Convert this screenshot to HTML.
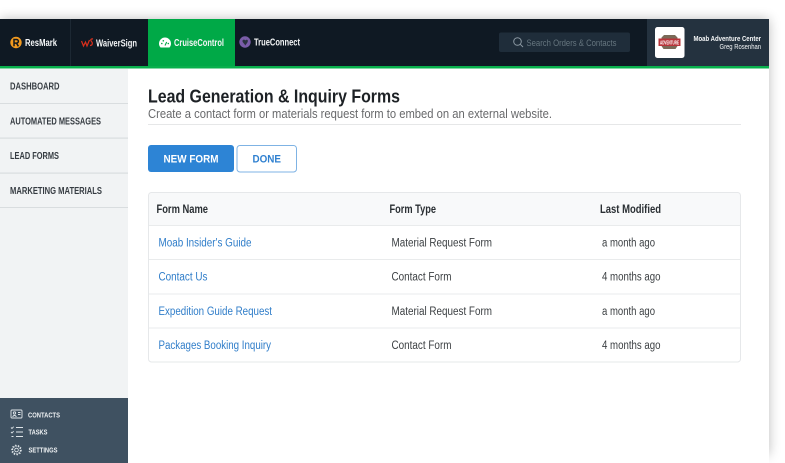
<!DOCTYPE html>
<html><head><meta charset="utf-8"><style>
html,body{margin:0;padding:0;background:#fff;width:785px;height:463px;overflow:hidden}
svg{display:block}
text{font-family:"Liberation Sans",sans-serif}
.h{font-weight:bold;font-size:10.5px;fill:#f4f6f7}
.s{font-weight:bold;font-size:10px;fill:#363c42}
.b{font-weight:bold;font-size:7.5px;fill:#eef1f3}
.t{font-weight:bold;font-size:11.5px;fill:#2a2f33}
.l{font-size:11.5px;fill:#2f7dc9}
.c{font-size:11.5px;fill:#3b3f42}
</style></head><body>
<svg width="785" height="463" viewBox="0 0 785 463" xmlns="http://www.w3.org/2000/svg">
<defs>
<filter id="sh" filterUnits="userSpaceOnUse" x="0" y="0" width="785" height="463"><feGaussianBlur stdDeviation="6"/></filter>
</defs>
<rect x="0" y="19" width="769" height="436" fill="#000" opacity=".26" filter="url(#sh)"/>
<rect x="0" y="19" width="769" height="444" fill="#fff"/>

<!-- header -->
<rect x="0" y="19" width="769" height="47" fill="#0f1923"/>
<rect x="70" y="19" width="1" height="47" fill="#1c2833"/>
<rect x="148" y="19" width="87" height="47" fill="#00a947"/>
<rect x="647" y="19" width="122" height="47" fill="#24323f"/>
<rect x="0" y="66" width="769" height="2.500" fill="#08b04c"/>

<!-- ResMark -->
<circle cx="16" cy="42.500" r="5.700" fill="#f29a1f"/>
<path d="M14 46.300V39.500h2.600a1.800 1.800 0 0 1 0 3.600H14M16.400 43l2 3.300" fill="none" stroke="#14181c" stroke-width="1.500"/>
<text class="h" x="25" y="46" textLength="32" lengthAdjust="spacingAndGlyphs">ResMark</text>
<!-- WaiverSign -->
<path d="M81.500 41l2 5 2-4 1.500 4 2.500-6M93 39c-2-.5-3 1-1.500 2.500s1 4-1.500 4" fill="none" stroke="#d92f1c" stroke-width="1.200"/>
<text class="h" x="96" y="46.500" textLength="41" lengthAdjust="spacingAndGlyphs">WaiverSign</text>
<!-- CruiseControl -->
<path d="M160.500 47.500A6 6 0 1 1 169.500 47.500Z" fill="#fff"/>
<path d="M165 45.500l1.700-3.500" stroke="#00a947" stroke-width="1.100"/>
<circle cx="161.800" cy="43.500" r=".8" fill="#00a947"/><circle cx="163.300" cy="40.800" r=".8" fill="#00a947"/><circle cx="168.300" cy="43.500" r=".8" fill="#00a947"/>
<text class="h" x="174" y="46" textLength="50" lengthAdjust="spacingAndGlyphs">CruiseControl</text>
<!-- TrueConnect -->
<circle cx="245" cy="42" r="5.700" fill="#7a5da8"/>
<path d="M242.500 40.500c1-1.500 2.500-.8 2.800 0 .4-.8 2-1.300 2.500 0 .4 1.500-1.500 3.500-2.500 5-.4-1.300-3.300-3.300-2.800-5z" fill="#2a3340"/>
<text class="h" x="254" y="45.500" textLength="46" lengthAdjust="spacingAndGlyphs">TrueConnect</text>

<!-- search -->
<rect x="499" y="32.500" width="131" height="19.500" rx="2" fill="#1f2d3a"/>
<circle cx="517.500" cy="41.500" r="3.800" fill="none" stroke="#8b98a2" stroke-width="1"/>
<path d="M520.300 44.300l2.700 2.700" stroke="#8b98a2" stroke-width="1"/>
<text x="526.500" y="46" font-size="9.500" fill="#66767f" textLength="90" lengthAdjust="spacingAndGlyphs">Search Orders &amp; Contacts</text>

<!-- account -->
<rect x="655" y="27" width="29.500" height="31" rx="2.500" fill="#fff"/>
<path d="M661.500 37.500l2.500-2.500h11l2.500 2.500v1h-16zM661.500 46h16l-2 3h-12z" fill="#7a6a58"/>
<rect x="658.500" y="38.500" width="22" height="7.500" fill="#b8343a"/>
<text x="660" y="44.300" font-size="5.500" font-weight="bold" fill="#fff" textLength="19" lengthAdjust="spacingAndGlyphs">ADVENTURE</text>
<text x="693.500" y="41" font-size="7.200" font-weight="bold" fill="#f4f6f7" textLength="67.500" lengthAdjust="spacingAndGlyphs">Moab Adventure Center</text>
<text x="719.500" y="49" font-size="7.200" fill="#f4f6f7" textLength="41.500" lengthAdjust="spacingAndGlyphs">Greg Rosenhan</text>

<!-- sidebar -->
<rect x="0" y="69" width="128" height="329" fill="#f1f3f4"/>
<g fill="#d9dddf"><rect y="103" width="128" height="1"/><rect y="137.500" width="128" height="1.200"/><rect y="172.500" width="128" height="1.200"/><rect y="207" width="128" height="1"/></g>
<text class="s" x="10" y="89.500" textLength="49.500" lengthAdjust="spacingAndGlyphs">DASHBOARD</text>
<text class="s" x="10" y="124.500" textLength="91" lengthAdjust="spacingAndGlyphs">AUTOMATED MESSAGES</text>
<text class="s" x="10" y="159" textLength="49" lengthAdjust="spacingAndGlyphs">LEAD FORMS</text>
<text class="s" x="10" y="194" textLength="92" lengthAdjust="spacingAndGlyphs">MARKETING MATERIALS</text>

<!-- sidebar bottom -->
<rect x="0" y="398" width="128" height="65" fill="#3f5161"/>
<g fill="none" stroke="#dfe5e9" stroke-width=".9">
<rect x="11" y="410" width="11" height="8" rx="1"/>
<circle cx="14.500" cy="413" r="1.200"/><path d="M12.800 417c.2-2 3.200-2 3.400 0M18 412.500h2.500M18 414.500h2.500"/>
<path d="M16 427.500h7M16 432h7M16 436.500h7M11 427.500l1 1 1.600-1.800M11 432l1 1 1.600-1.800M11.500 436.500h2"/>
<circle cx="16.500" cy="450" r="1.800"/>
<circle cx="16.500" cy="450" r="4" stroke-width="1.300" stroke-dasharray="1.600 .9"/>
<circle cx="16.500" cy="450" r="5" stroke-width=".7" stroke-dasharray="1.400 1.700"/>
</g>
<text class="b" x="28" y="417.500" textLength="32" lengthAdjust="spacingAndGlyphs">CONTACTS</text>
<text class="b" x="28.500" y="434.500" textLength="19" lengthAdjust="spacingAndGlyphs">TASKS</text>
<text class="b" x="28.500" y="452.500" textLength="29" lengthAdjust="spacingAndGlyphs">SETTINGS</text>

<!-- heading -->
<text x="148" y="102.500" font-size="18.500" font-weight="bold" fill="#1d2125" textLength="252" lengthAdjust="spacingAndGlyphs">Lead Generation &amp; Inquiry Forms</text>
<text x="148" y="118" font-size="12.500" fill="#68696b" textLength="404" lengthAdjust="spacingAndGlyphs">Create a contact form or materials request form to embed on an external website.</text>
<rect x="148" y="124" width="593" height="1" fill="#e6e7e8"/>

<!-- buttons -->
<rect x="148" y="145" width="86" height="27" rx="3" fill="#2d84d5"/>
<text x="163.500" y="162.500" font-size="11" font-weight="bold" fill="#fff" textLength="55" lengthAdjust="spacingAndGlyphs">NEW FORM</text>
<rect x="237" y="145.500" width="59.500" height="26.500" rx="3" fill="#fff" stroke="#7fb3e4"/>
<text x="252.500" y="162.500" font-size="11" font-weight="bold" fill="#2f80d0" textLength="28.500" lengthAdjust="spacingAndGlyphs">DONE</text>

<!-- table -->
<path d="M151 192.500h587a2.500 2.500 0 0 1 2.500 2.500V225h-592V195a2.500 2.500 0 0 1 2.500-2.500z" fill="#f8f9fa"/>
<rect x="148.500" y="192.500" width="592" height="169.500" rx="3" fill="none" stroke="#e6e8ea"/>
<g fill="#e9ebec"><rect x="149" y="225" width="591" height="1"/><rect x="149" y="259" width="591" height="1"/><rect x="149" y="293.500" width="591" height="1"/><rect x="149" y="327.500" width="591" height="1"/></g>
<text class="t" x="156.500" y="213" textLength="51.500" lengthAdjust="spacingAndGlyphs">Form Name</text>
<text class="t" x="389.500" y="213" textLength="46.500" lengthAdjust="spacingAndGlyphs">Form Type</text>
<text class="t" x="600" y="213" textLength="61" lengthAdjust="spacingAndGlyphs">Last Modified</text>

<text class="l" x="158.500" y="246.500" textLength="93" lengthAdjust="spacingAndGlyphs">Moab Insider's Guide</text>
<text class="c" x="391.500" y="246.500" textLength="100.500" lengthAdjust="spacingAndGlyphs">Material Request Form</text>
<text class="c" x="602" y="246.500" textLength="53" lengthAdjust="spacingAndGlyphs">a month ago</text>

<text class="l" x="158.500" y="280.500" textLength="49" lengthAdjust="spacingAndGlyphs">Contact Us</text>
<text class="c" x="391.500" y="280.500" textLength="60" lengthAdjust="spacingAndGlyphs">Contact Form</text>
<text class="c" x="602" y="280.500" textLength="58.500" lengthAdjust="spacingAndGlyphs">4 months ago</text>

<text class="l" x="158.500" y="315" textLength="113.500" lengthAdjust="spacingAndGlyphs">Expedition Guide Request</text>
<text class="c" x="391.500" y="315" textLength="100.500" lengthAdjust="spacingAndGlyphs">Material Request Form</text>
<text class="c" x="602" y="315" textLength="53" lengthAdjust="spacingAndGlyphs">a month ago</text>

<text class="l" x="158.500" y="349" textLength="112.500" lengthAdjust="spacingAndGlyphs">Packages Booking Inquiry</text>
<text class="c" x="391.500" y="349" textLength="60" lengthAdjust="spacingAndGlyphs">Contact Form</text>
<text class="c" x="602" y="349" textLength="58.500" lengthAdjust="spacingAndGlyphs">4 months ago</text>
</svg>
</body></html>
